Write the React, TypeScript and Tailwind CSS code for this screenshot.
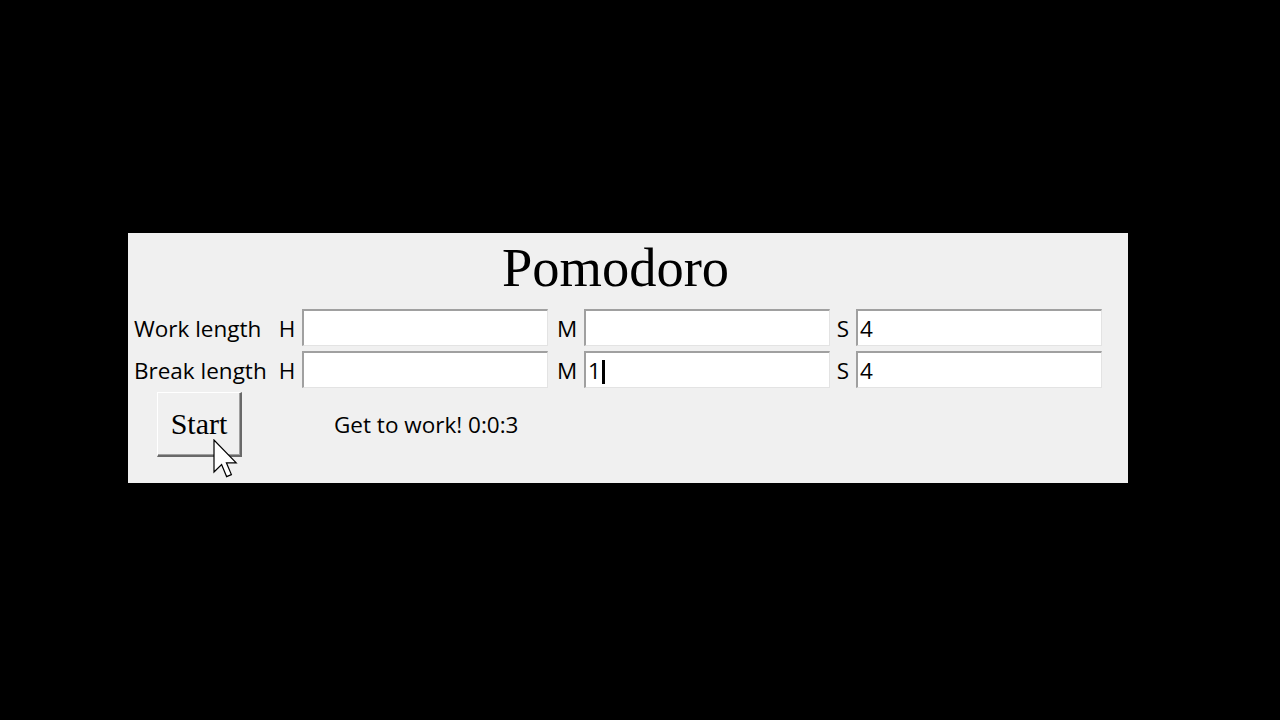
import React from "react";

const sans = { fontFamily: '"Open Sans", "DejaVu Sans", sans-serif' };
const serif = { fontFamily: '"Liberation Serif", "Times New Roman", serif' };

function Entry({ value, caret }: { value?: string; caret?: boolean }) {
  return (
    <div className="h-[37px] w-[246px] bg-white border-t-2 border-l-2 border-b border-r border-t-[#a0a0a0] border-l-[#a0a0a0] border-b-[#e3e3e3] border-r-[#e3e3e3] flex items-center pl-[2px] pt-[3px] text-[22.5px] text-black leading-none">
      <span>{value}</span>
      {caret && <span className="inline-block w-[3px] h-[24px] bg-black ml-[1px]" />}
    </div>
  );
}

function Row({ label, m, s, caret }: { label: string; m?: string; s?: string; caret?: boolean }) {
  return (
    <div className="flex items-center h-[37px]">
      <div className="w-[144px] pl-[6px] pt-[4px] text-[22.5px] leading-none whitespace-nowrap">{label}</div>
      <div className="w-[30px] pt-[4px] text-center text-[22.5px] leading-none">H</div>
      <Entry />
      <div className="w-[36px] pt-[4px] text-center text-[22.5px] leading-none pl-[2px]">M</div>
      <Entry value={m} caret={caret} />
      <div className="w-[26px] pt-[4px] text-center text-[22.5px] leading-none">S</div>
      <Entry value={s} />
    </div>
  );
}

export default function App() {
  return (
    <div className="w-[1280px] h-[720px] bg-black pt-[233px] pl-[128px] overflow-hidden">
      <div className="relative w-[1000px] h-[250px] bg-[#f0f0f0] text-black" style={sans}>
        <div className="h-[76px] pt-[8px] pl-[374px]">
          <div className="text-[54.5px] leading-[54px] whitespace-nowrap" style={serif}>
            Pomodoro
          </div>
        </div>
        <div className="flex flex-col gap-[5px]">
          <Row label="Work length" s="4" />
          <Row label="Break length" m="1" s="4" caret />
        </div>
        <div className="flex items-center mt-[4px]">
          <div className="ml-[29px] w-[85px] h-[65px] bg-[#f0f0f0] border-t border-l border-t-white border-l-white border-b-2 border-r-2 border-b-[#696969] border-r-[#696969] shadow-[inset_-1px_-1px_0_#a0a0a0] flex items-center justify-center">
            <span className="text-[30px] leading-none" style={serif}>Start</span>
          </div>
          <div className="ml-[92px] pt-[2px] text-[22.5px] leading-none whitespace-nowrap">Get to work! 0:0:3</div>
        </div>
        <svg
          className="absolute left-[85px] top-[206px]"
          width="26"
          height="40"
          viewBox="0 0 13 20"
        >
          <path
            d="M0.5 0.5 L0.5 16.5 L4.3 12.8 L6.8 18.8 L9.2 17.8 L6.7 11.9 L11.6 11.9 Z"
            fill="white"
            stroke="black"
            strokeWidth="0.6"
            strokeLinejoin="miter"
          />
        </svg>
      </div>
    </div>
  );
}
